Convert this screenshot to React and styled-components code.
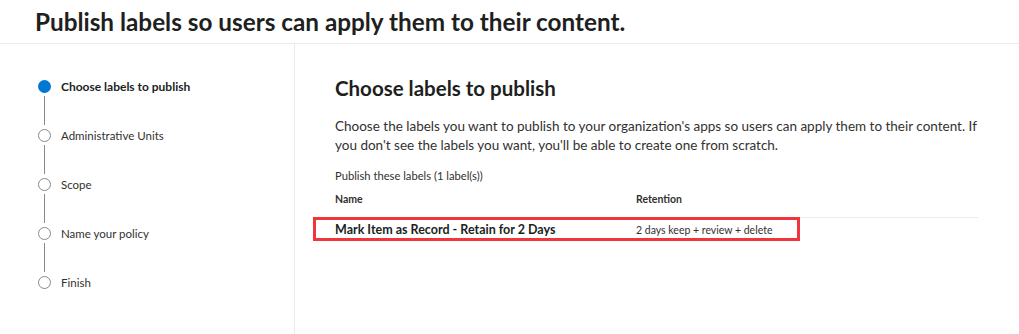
import React from "react";
import styled, { createGlobalStyle } from "styled-components";

const GlobalStyle = createGlobalStyle`
  html, body {
    margin: 0;
    padding: 0;
    background: #ffffff;
  }
  body {
    font-family: Lato, "Noto Sans", sans-serif;
    color: #323130;
  }
`;

const steps = [
  "Choose labels to publish",
  "Administrative Units",
  "Scope",
  "Name your policy",
  "Finish",
];

export default function App() {
  return (
    <>
      <GlobalStyle />
      <Page>
        <Header>
          <Title>Publish labels so users can apply them to their content.</Title>
        </Header>
        <Body>
          <Nav>
            {steps.map((s, i) => (
              <Step key={s} $last={i === steps.length - 1}>
                <Marker>
                  <Dot $active={i === 0} />
                  {i < steps.length - 1 && <Connector />}
                </Marker>
                <StepLabel $active={i === 0}>{s}</StepLabel>
              </Step>
            ))}
          </Nav>
          <Main>
            <Heading>Choose labels to publish</Heading>
            <Intro>
              Choose the labels you want to publish to your organization's apps so users can apply them to their content. If
              you don't see the labels you want, you'll be able to create one from scratch.
            </Intro>
            <Caption>Publish these labels (1 label(s))</Caption>
            <Table>
              <HeadRow>
                <NameCell>Name</NameCell>
                <Cell>Retention</Cell>
              </HeadRow>
              <Row>
                <NameCell $strong>Mark Item as Record - Retain for 2 Days</NameCell>
                <Cell>2 days keep + review + delete</Cell>
                <Highlight />
              </Row>
            </Table>
          </Main>
        </Body>
      </Page>
    </>
  );
}

const Page = styled.div`
  width: 1019px;
  height: 334px;
  overflow: hidden;
  display: flex;
  flex-direction: column;
`;

const Header = styled.div`
  height: 44px;
  box-sizing: border-box;
  border-bottom: 1px solid #edebe9;
  padding-left: 35px;
  display: flex;
  align-items: center;
`;

const Title = styled.h1`
  margin: 0 0 1px;
  font-size: 24.3px;
  font-weight: 700;
  color: #201f1e;
`;

const Body = styled.div`
  flex: 1;
  display: flex;
`;

const Nav = styled.div`
  width: 295px;
  box-sizing: border-box;
  border-right: 1px solid #edebe9;
  padding: 36px 0 0 38px;
`;

const Step = styled.div`
  display: flex;
  height: ${(p) => (p.$last ? "auto" : "49px")};
`;

const Marker = styled.div`
  width: 13px;
  display: flex;
  flex-direction: column;
  align-items: center;
  margin-right: 10px;
`;

const Dot = styled.div`
  width: 13px;
  height: 13px;
  box-sizing: border-box;
  border-radius: 50%;
  flex-shrink: 0;
  background: ${(p) => (p.$active ? "#0078d4" : "#ffffff")};
  border: ${(p) => (p.$active ? "none" : "1.5px solid #8a8886")};
`;

const Connector = styled.div`
  flex: 1;
  width: 1px;
  background: #8a8886;
  margin: 3px 0 4px;
`;

const StepLabel = styled.div`
  font-size: ${(p) => (p.$active ? "12px" : "11.5px")};
  line-height: 13px;
  font-weight: ${(p) => (p.$active ? 700 : 400)};
  color: ${(p) => (p.$active ? "#201f1e" : "#323130")};
`;

const Main = styled.div`
  flex: 1;
  padding: 31px 0 0 40px;
`;

const Heading = styled.h2`
  margin: 0;
  font-size: 20.5px;
  line-height: 26px;
  font-weight: 700;
  color: #201f1e;
`;

const Intro = styled.p`
  margin: 16px 0 0;
  width: 645px;
  font-size: 13.5px;
  line-height: 19px;
`;

const Caption = styled.div`
  margin-top: 13px;
  font-size: 11.2px;
  line-height: 16px;
`;

const Table = styled.div`
  width: 643px;
  margin-top: 7px;
`;

const HeadRow = styled.div`
  display: flex;
  line-height: 16px;
  padding-bottom: 10px;
  border-bottom: 1px solid #edebe9;
  font-size: 10.5px;
  font-weight: 700;
  color: #323130;
`;

const Row = styled.div`
  position: relative;
  display: flex;
  height: 23px;
  align-items: center;
`;

const NameCell = styled.div`
  width: 301px;
  font-size: ${(p) => (p.$strong ? "12.5px" : "inherit")};
  font-weight: ${(p) => (p.$strong ? 700 : "inherit")};
  color: ${(p) => (p.$strong ? "#201f1e" : "inherit")};
`;

const Cell = styled.div`
  flex: 1;
  font-size: 10.5px;
`;

const Highlight = styled.div`
  position: absolute;
  left: -22px;
  top: -1px;
  width: 487px;
  height: 24px;
  box-sizing: border-box;
  border: 3px solid #f0363c;
  pointer-events: none;
`;
